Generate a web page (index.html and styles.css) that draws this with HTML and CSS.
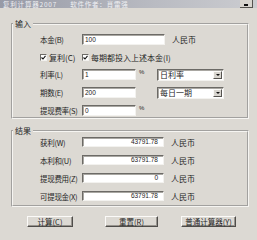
FILE: index.html
```html
<!DOCTYPE html>
<html lang="zh-CN">
<head>
  <meta charset="UTF-8">
  <title>复利计算器2007</title>
  <link rel="stylesheet" href="styles.css">
</head>
<body>
  <!-- Window title bar -->
  <div class="titlebar">
    <span class="title">复利计算器2007<span class="author">软件作者：肖雷强</span></span>
    <span class="min-btn"></span>
  </div>

  <div class="dialog">
    <!-- Input group -->
    <fieldset class="group">
      <legend>输入</legend>
      <div class="group-body group-input">
        <div class="row">
          <span class="lbl">本金(B)</span>
          <div class="field w83">100</div>
          <span class="unit">人民币</span>
        </div>
        <div class="row checks">
          <span class="check first"><span class="box"><svg width="5" height="5" viewBox="0 0 5 5"><path d="M0.5 2.5 L2 4 L4.5 0.8" fill="none" stroke="#111" stroke-width="1.1"/></svg></span>复利(C)</span>
          <span class="check"><span class="box"><svg width="5" height="5" viewBox="0 0 5 5"><path d="M0.5 2.5 L2 4 L4.5 0.8" fill="none" stroke="#111" stroke-width="1.1"/></svg></span>每期都投入上述本金(I)</span>
        </div>
        <div class="row">
          <span class="lbl">利率(L)</span>
          <div class="field w54">1</div>
          <span class="pct">%</span>
          <div class="select"><span>日利率</span><span class="arrow"></span></div>
        </div>
        <div class="row">
          <span class="lbl">期数(E)</span>
          <div class="field w54">200</div>
          <span class="pct"></span>
          <div class="select"><span>每日一期</span><span class="arrow"></span></div>
        </div>
        <div class="row">
          <span class="lbl">提现费率(S)</span>
          <div class="field w54">0</div>
          <span class="pct">%</span>
        </div>
      </div>
    </fieldset>

    <!-- Result group -->
    <fieldset class="group group-result">
      <legend>结果</legend>
      <div class="group-body result-body">
        <div class="row res">
          <span class="lbl">获利(W)</span>
          <div class="field w82 num">43791.78</div>
          <span class="unit">人民币</span>
        </div>
        <div class="row res">
          <span class="lbl">本利和(U)</span>
          <div class="field w82 num">63791.78</div>
          <span class="unit">人民币</span>
        </div>
        <div class="row res">
          <span class="lbl">提现费用(Z)</span>
          <div class="field w82 num">0</div>
          <span class="unit">人民币</span>
        </div>
        <div class="row res">
          <span class="lbl">可提现金(X)</span>
          <div class="field w82 num">63791.78</div>
          <span class="unit">人民币</span>
        </div>
      </div>
    </fieldset>

    <div class="buttons">
      <button class="btn btn-calc">计算(C)</button>
      <button class="btn btn-reset">重置(R)</button>
      <button class="btn btn-normal">普通计算器(Y)</button>
    </div>
  </div>
</body>
</html>
```

FILE: styles.css
```css
/* Page */
body {
  margin: 0;
  width: 257px;
  height: 240px;
  overflow: hidden;
  background: #dcd9d3;
  font-family: "Noto Sans CJK SC", sans-serif;
  font-size: 8px;
  color: #262626;
}

/* Title bar */
.titlebar {
  height: 8px;
  display: flex;
  justify-content: space-between;
  align-items: center;
  background: linear-gradient(to right, #979aa6, #b9bbc2 60%, #cbccd0);
}

.title {
  padding-left: 3px;
  font-size: 6.5px;
  line-height: 8px;
  letter-spacing: 0.8px;
  color: #f0f1f4;
  white-space: nowrap;
}

.author {
  margin-left: 13px;
}

.min-btn {
  width: 12px;
  height: 7px;
  margin-right: 4px;
  align-self: flex-start;
  background: #d8d5cf;
  border-right: 1px solid #55534f;
  border-bottom: 1px solid #55534f;
  position: relative;
}

.min-btn::after {
  content: "";
  position: absolute;
  left: 4px;
  top: 4px;
  width: 4px;
  height: 2px;
  background: #111;
}

/* Dialog */
.dialog {
  padding: 11px 8px 0 11px;
}

.group {
  margin: 0;
  padding: 0;
  min-width: 0;
  border: 2px groove #f6f5f2;
}

.group legend {
  padding: 0 2px;
  margin-left: 0;
  line-height: 10px;
}

.group-body {
  display: flex;
  flex-direction: column;
  gap: 7px;
  padding: 5px 0 1px 27px;
}

.group-result {
  margin-top: 7px;
}

.result-body {
  gap: 8px;
  padding: 1px 0 4px 27px;
}

/* Rows */
.row {
  display: flex;
  align-items: center;
  height: 11px;
}

.row.res {
  height: 10px;
}

.row.checks {
  height: 10px;
}

.lbl {
  flex: 0 0 42px;
  font-size: 7.5px;
  letter-spacing: -0.3px;
  white-space: nowrap;
}

.field {
  box-sizing: border-box;
  height: 11px;
  padding-left: 2px;
  background: #fff;
  border: 1px solid;
  border-color: #6c6a66 #f3f2ef #f3f2ef #6c6a66;
  box-shadow: inset 1px 1px #a9a7a2;
  font-family: "Liberation Sans", sans-serif;
  font-size: 6.5px;
  line-height: 9px;
  color: #222;
}

.res .field {
  height: 10px;
  line-height: 8px;
}

.w83 { width: 83px; }
.w82 { width: 82px; }
.w54 { width: 54px; }

.num {
  text-align: right;
  padding-right: 5px;
}

.unit {
  padding-left: 7px;
  white-space: nowrap;
}

.pct {
  box-sizing: border-box;
  flex: 0 0 21px;
  padding-left: 3px;
  font-family: "Liberation Sans", sans-serif;
  font-size: 6px;
  align-self: flex-start;
}

/* Drop-down boxes */
.select {
  box-sizing: border-box;
  display: flex;
  justify-content: space-between;
  align-items: center;
  width: 67px;
  height: 12px;
  padding: 0 1px 0 2px;
  background: #fff;
  border: 1px solid;
  border-color: #6c6a66 #f3f2ef #f3f2ef #6c6a66;
  box-shadow: inset 1px 1px #a9a7a2;
  white-space: nowrap;
}

.arrow {
  box-sizing: border-box;
  width: 9px;
  height: 8px;
  background: #d8d5cf;
  border: 1px solid;
  border-color: #fbfaf8 #55534f #55534f #fbfaf8;
  position: relative;
}

.arrow::after {
  content: "";
  position: absolute;
  left: 2px;
  top: 2px;
  border-left: 2px solid transparent;
  border-right: 2px solid transparent;
  border-top: 2px solid #111;
}

/* Check boxes */
.check {
  display: flex;
  align-items: center;
  white-space: nowrap;
}

.check.first {
  flex: 0 0 42px;
}

.box {
  box-sizing: border-box;
  display: flex;
  align-items: center;
  justify-content: center;
  width: 7px;
  height: 7px;
  margin-right: 2px;
  background: #fff;
  border: 1px solid;
  border-color: #6c6a66 #f3f2ef #f3f2ef #6c6a66;
}

/* Buttons */
.buttons {
  display: flex;
  padding: 9px 0 0 16px;
}

.btn {
  box-sizing: border-box;
  height: 11px;
  padding: 0;
  background: #dcd9d3;
  border: 1px solid;
  border-color: #fbfaf8 #4f4d4a #4f4d4a #fbfaf8;
  box-shadow: inset -1px -1px #98958f;
  font-family: "Noto Sans CJK SC", sans-serif;
  font-size: 7.5px;
  line-height: 9px;
  color: #262626;
}

.btn-calc { width: 46px; }
.btn-reset { width: 53px; margin-left: 32px; }
.btn-normal { width: 55px; margin-left: 23px; }
```
